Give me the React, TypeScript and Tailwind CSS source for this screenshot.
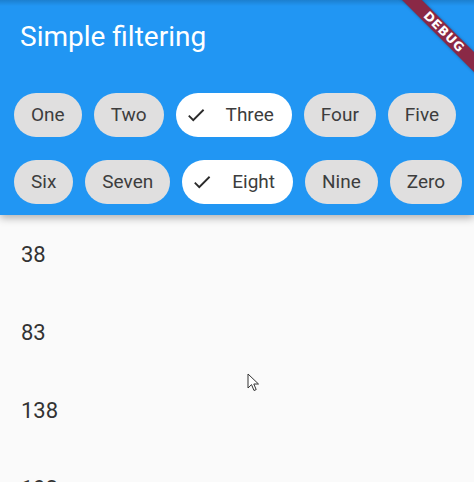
import { useState } from "react";

const labels = ["One", "Two", "Three", "Four", "Five", "Six", "Seven", "Eight", "Nine", "Zero"];
const values = [38, 83, 138, 193, 248, 303];

const CheckIcon = () => (
  <svg width="22" height="22" viewBox="0 0 24 24" className="shrink-0">
    <path d="M9 16.17L4.83 12l-1.42 1.41L9 19 21 7l-1.41-1.41z" fill="#2b2b2b" />
  </svg>
);

const FilterChip = ({
  label,
  selected,
  onToggle,
}: {
  label: string;
  selected: boolean;
  onToggle: () => void;
}) =>
  selected ? (
    <button
      onClick={onToggle}
      className="flex h-[44px] items-center gap-[19px] rounded-full bg-white pl-[9px] pr-[18px] text-[19px] text-[#3d3d3d]"
    >
      <CheckIcon />
      <span>{label}</span>
    </button>
  ) : (
    <button
      onClick={onToggle}
      className="flex h-[44px] items-center rounded-full bg-[#e0dfdf] px-[17px] text-[19px] text-[#3d3d3d]"
    >
      {label}
    </button>
  );

export default function App() {
  const [selected, setSelected] = useState<string[]>(["Three", "Eight"]);

  const toggle = (label: string) =>
    setSelected((current) =>
      current.includes(label) ? current.filter((l) => l !== label) : [...current, label],
    );

  return (
    <div className="relative h-[482px] w-full overflow-hidden bg-[#fafafa] font-['Roboto',sans-serif]">
      <header className="relative z-10 bg-[#2196f3] pb-[11px] shadow-[0_3px_8px_rgba(0,0,0,0.3)]">
        <div className="pointer-events-none absolute inset-x-0 top-0 h-[6px] bg-gradient-to-b from-black/15 to-transparent" />
        <h1 className="pl-[20px] pt-[23px] text-[28px] leading-[28px] text-white">Simple filtering</h1>
        <div className="mt-[42px] flex flex-wrap gap-x-[12px] gap-y-[23px] pl-[14px] pr-[8px]">
          {labels.map((label) => (
            <FilterChip
              key={label}
              label={label}
              selected={selected.includes(label)}
              onToggle={() => toggle(label)}
            />
          ))}
        </div>
      </header>

      <ul>
        {values.map((v) => (
          <li key={v} className="flex h-[78px] items-center pl-[21px] text-[22px] text-[#333333]">
            {v}
          </li>
        ))}
      </ul>

      {/* mouse pointer */}
      <svg width="13" height="19" viewBox="0 0 13 19" className="pointer-events-none absolute left-[247px] top-[373px] z-20">
        <path d="M1 1 L1 15 L4.5 11.6 L7 17.5 L9.2 16.6 L6.8 11 L11.5 11 Z" fill="white" stroke="#333" strokeWidth="1" strokeLinejoin="round" />
      </svg>

      {/* debug ribbon */}
      <div className="pointer-events-none absolute right-0 top-0 z-30 h-[80px] w-[80px] overflow-hidden">
        <div className="absolute left-[-10px] top-[25px] flex h-[14px] w-[120px] rotate-45 items-center justify-center bg-[#8a2946] shadow-[0_0_3px_rgba(0,0,0,0.35)]">
          <span className="text-[12.5px] font-bold leading-none tracking-[0.6px] text-white font-['DejaVu_Sans',sans-serif]">
            DEBUG
          </span>
        </div>
      </div>
    </div>
  );
}
